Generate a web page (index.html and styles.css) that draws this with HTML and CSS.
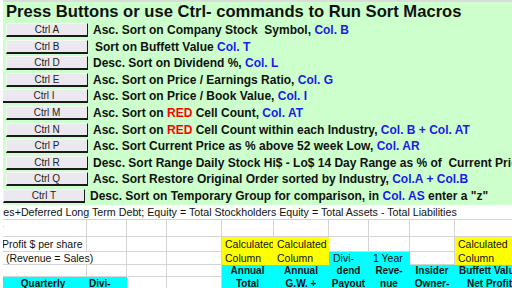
FILE: index.html
```html
<!DOCTYPE html>
<html lang="en">
<head>
    <meta charset="UTF-8">
    <title>Sort Macros</title>
    <link rel="stylesheet" href="styles.css">
</head>
<body>
    <div class="sheet">
        <div class="macros">
            <h1 class="title">Press Buttons or use Ctrl- commands to Run Sort Macros</h1>
            <div class="macro-row"><button class="ctrl">Ctrl A</button><p class="desc">Asc. Sort on Company Stock&nbsp; Symbol, <span class="col">Col. B</span></p></div>
            <div class="macro-row"><button class="ctrl">Ctrl B</button><p class="desc shift">Sort on Buffett Value <span class="col">Col. T</span></p></div>
            <div class="macro-row"><button class="ctrl">Ctrl D</button><p class="desc">Desc. Sort on Dividend %, <span class="col">Col. L</span></p></div>
            <div class="macro-row"><button class="ctrl">Ctrl E</button><p class="desc">Asc. Sort on Price / Earnings Ratio, <span class="col">Col. G</span></p></div>
            <div class="macro-row"><button class="ctrl wide">Ctrl I</button><p class="desc">Asc. Sort on Price / Book Value, <span class="col">Col. I</span></p></div>
            <div class="macro-row"><button class="ctrl">Ctrl M</button><p class="desc">Asc. Sort on <span class="red">RED</span> Cell Count, <span class="col">Col. AT</span></p></div>
            <div class="macro-row"><button class="ctrl">Ctrl N</button><p class="desc">Asc. Sort on <span class="red">RED</span> Cell Count within each Industry, <span class="col">Col. B + Col. AT</span></p></div>
            <div class="macro-row"><button class="ctrl">Ctrl P</button><p class="desc">Asc. Sort Current Price as % above 52 week Low, <span class="col">Col. AR</span></p></div>
            <div class="macro-row"><button class="ctrl">Ctrl R</button><p class="desc">Desc. Sort Range Daily Stock Hi$ - Lo$ 14 Day Range as % of&nbsp; Current Price</p></div>
            <div class="macro-row"><button class="ctrl">Ctrl Q</button><p class="desc">Asc. Sort Restore Original Order sorted by Industry, <span class="col">Col.A + Col.B</span></p></div>
            <div class="macro-row"><span class="stub">n</span><button class="ctrl">Ctrl T</button><p class="desc">Desc. Sort on Temporary Group for comparison, in <span class="col">Col. AS</span> enter a "z"</p></div>
            <span class="sel-mark"></span>
        </div>

        <div class="note">ies+Deferred Long Term Debt; Equity = Total Stockholders Equity = Total Assets - Total Liabilities</div>

        <div class="grid">
            <!-- row 1 -->
            <div class="cell"><span class="tail">y</span></div>
            <div class="cell"></div>
            <div class="cell"></div>
            <div class="cell"></div>
            <div class="cell"></div>
            <div class="cell"></div>
            <div class="cell"></div>
            <div class="cell"></div>
            <div class="cell"></div>
            <div class="cell"></div>
            <!-- row 2 -->
            <div class="cell">Profit $ per share</div>
            <div class="cell"></div>
            <div class="cell"></div>
            <div class="cell"></div>
            <div class="cell yellow">Calculated</div>
            <div class="cell yellow">Calculated</div>
            <div class="cell"></div>
            <div class="cell"></div>
            <div class="cell"></div>
            <div class="cell yellow">Calculated</div>
            <!-- row 3 -->
            <div class="cell span2">&nbsp;(Revenue = Sales)</div>
            <div class="cell"></div>
            <div class="cell"></div>
            <div class="cell yellow">Column</div>
            <div class="cell yellow">Column</div>
            <div class="cell cyan left">Divi-</div>
            <div class="cell cyan left">1 Year</div>
            <div class="cell"></div>
            <div class="cell yellow">Column</div>
            <!-- row 4 -->
            <div class="cell"></div>
            <div class="cell"></div>
            <div class="cell"></div>
            <div class="cell"></div>
            <div class="cell cyan head">Annual</div>
            <div class="cell cyan head">Annual</div>
            <div class="cell cyan head">dend</div>
            <div class="cell cyan head">Reve-</div>
            <div class="cell cyan head">Insider</div>
            <div class="cell cyan head">Buffett Value</div>
            <!-- row 5 -->
            <div class="cell cyan head">Quarterly</div>
            <div class="cell cyan head left">Divi-</div>
            <div class="cell"></div>
            <div class="cell"></div>
            <div class="cell cyan head">Total</div>
            <div class="cell cyan head">G.W. +</div>
            <div class="cell cyan head">Payout</div>
            <div class="cell cyan head">nue</div>
            <div class="cell cyan head">Owner-</div>
            <div class="cell cyan head">Net Profit</div>
        </div>
    </div>
</body>
</html>
```

FILE: styles.css
```css
body {
    margin: 0;
    padding: 0;
    background-color: #ffffff;
    font-family: "Liberation Sans", Arial, sans-serif;
    color: #111111;
    overflow: hidden;
}

.sheet {
    width: 512px;
    height: 288px;
    overflow: hidden;
    border-left: 3px solid #ffffff;
    box-sizing: border-box;
}

.macros {
    position: relative;
    background-color: #ccffcc;
    border-top: 2px solid #dcdcdc;
    padding: 0 0 1px 3px;
}

.title {
    font-size: 16.6px;
    font-weight: bold;
    line-height: 20px;
    margin: 0;
    white-space: nowrap;
}

.macro-row {
    display: flex;
    align-items: center;
    gap: 5px;
    height: 16.55px;
    white-space: nowrap;
}

.ctrl {
    width: 82px;
    height: 14px;
    padding: 0;
    flex-shrink: 0;
    font-family: "Liberation Sans", Arial, sans-serif;
    font-size: 10px;
    line-height: 12px;
    color: #222222;
    background-color: #ebe8ef;
    border: 1px solid;
    border-color: #f6f6f6 #1a1a1a #1a1a1a #f6f6f6;
    border-bottom-width: 2px;
}

.ctrl.wide {
    width: 88px;
    margin-left: -6px;
}

.stub {
    width: 3px;
    margin-left: -6px;
    margin-right: -5px;
    font-size: 10.5px;
    overflow: hidden;
    flex-shrink: 0;
    direction: rtl;
}

.desc {
    margin: 0;
    font-size: 12px;
    font-weight: bold;
    line-height: 16px;
}

.desc.shift {
    padding-left: 2px;
}

.col {
    color: #1a1aee;
}

.red {
    color: #ff0000;
}

.sel-mark {
    position: absolute;
    left: -3px;
    top: 37px;
    width: 3px;
    height: 3px;
    background-color: #3366cc;
}

.note {
    height: 15px;
    line-height: 15px;
    font-size: 10.7px;
    white-space: nowrap;
    border-bottom: 1px solid #d4d4d4;
    margin-left: -3px;
    padding-left: 1px;
    box-sizing: border-box;
}

.grid {
    display: grid;
    grid-template-columns: 87px 40px 40px 55px 52px 55px 40px 41px 45px 70px;
    grid-template-rows: 17px 15px 13px 12px 14px;
    margin-left: -3px;
}

.cell {
    font-size: 10.5px;
    white-space: nowrap;
    overflow: hidden;
    padding-left: 2px;
    border-right: 1px solid #d4d4d4;
    border-bottom: 1px solid #d4d4d4;
    box-sizing: border-box;
    display: flex;
    align-items: center;
}

.cell.span2 {
    grid-column: span 2;
    padding-left: 3px;
}

.tail {
    margin-left: -4px;
}

.cell.yellow {
    background-color: #ffff00;
    border-color: transparent;
    padding-left: 3px;
}

.cell.cyan {
    background-color: #00ffff;
    border-color: transparent;
}

.cell.left {
    padding-left: 4px;
}

.cell.head {
    font-size: 10px;
    font-weight: bold;
    justify-content: center;
    padding-left: 0;
}

.cell.head.left {
    justify-content: flex-start;
    padding-left: 2px;
}
```
